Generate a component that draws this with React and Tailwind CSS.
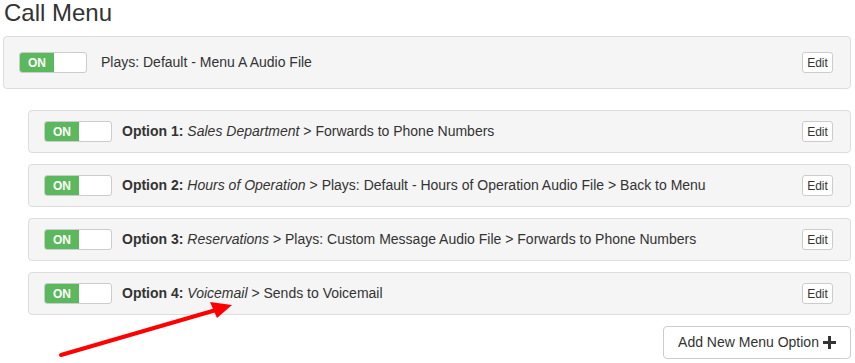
import React from "react";

const options = [
  { n: 1, name: "Sales Department", rest: "Forwards to Phone Numbers" },
  { n: 2, name: "Hours of Operation", rest: "Plays: Default - Hours of Operation Audio File > Back to Menu" },
  { n: 3, name: "Reservations", rest: "Plays: Custom Message Audio File > Forwards to Phone Numbers" },
  { n: 4, name: "Voicemail", rest: "Sends to Voicemail" },
];

function Toggle() {
  return (
    <div className="flex h-[21px] w-[68px] shrink-0 overflow-hidden rounded-[3px] border border-[#ccc] bg-white">
      <div className="flex w-[34px] items-center justify-center bg-[#5cb85c] text-[12px] font-bold text-white">ON</div>
    </div>
  );
}

function EditButton() {
  return (
    <button className="ml-auto flex h-[21px] w-[31px] shrink-0 items-center justify-center rounded-[3px] border border-[#ccc] bg-white text-[12px] text-[#333]">
      Edit
    </button>
  );
}

export default function App() {
  return (
    <div className="relative h-[363px] w-[855px] bg-white font-['Liberation_Sans',Arial,sans-serif] text-[14px] text-[#333]">
      <h1 className="pl-[4px] text-[24px] leading-[1.1] font-normal text-[#333]">Call Menu</h1>

      <div className="mt-[10px] ml-[3px] mr-[4px] flex items-center rounded-[4px] border border-[#ddd] bg-[#f5f5f5] py-[15px] pl-[15px] pr-[17px]">
        <Toggle />
        <span className="ml-[14px]">Plays: Default - Menu A Audio File</span>
        <EditButton />
      </div>

      <div className="mt-[21px] ml-[28px] mr-[4px] flex flex-col gap-[11px]">
        {options.map((o) => (
          <div key={o.n} className="flex items-center rounded-[4px] border border-[#ddd] bg-[#f5f5f5] py-[10px] pl-[15px] pr-[17px]">
            <Toggle />
            <span className="ml-[10px]">
              <b>Option {o.n}:</b> <i>{o.name}</i> &gt; {o.rest}
            </span>
            <EditButton />
          </div>
        ))}
      </div>

      <div className="mt-[11px] mr-[4px] flex justify-end">
        <button className="flex h-[33px] w-[188px] items-center justify-center gap-[4px] rounded-[4px] border border-[#ccc] bg-white text-[14px] text-[#333]">
          Add New Menu Option
          <svg width="13" height="13" viewBox="0 0 13 13">
            <path d="M5 0h3v5h5v3H8v5H5V8H0V5h5z" fill="#333" />
          </svg>
        </button>
      </div>

      <svg className="pointer-events-none absolute left-0 top-0" width="855" height="363">
        <line x1="61" y1="355" x2="216" y2="310" stroke="#ff0000" strokeWidth="4" strokeLinecap="round" />
        <polygon points="232,305 210,302 217,318" fill="#ff0000" />
      </svg>
    </div>
  );
}
